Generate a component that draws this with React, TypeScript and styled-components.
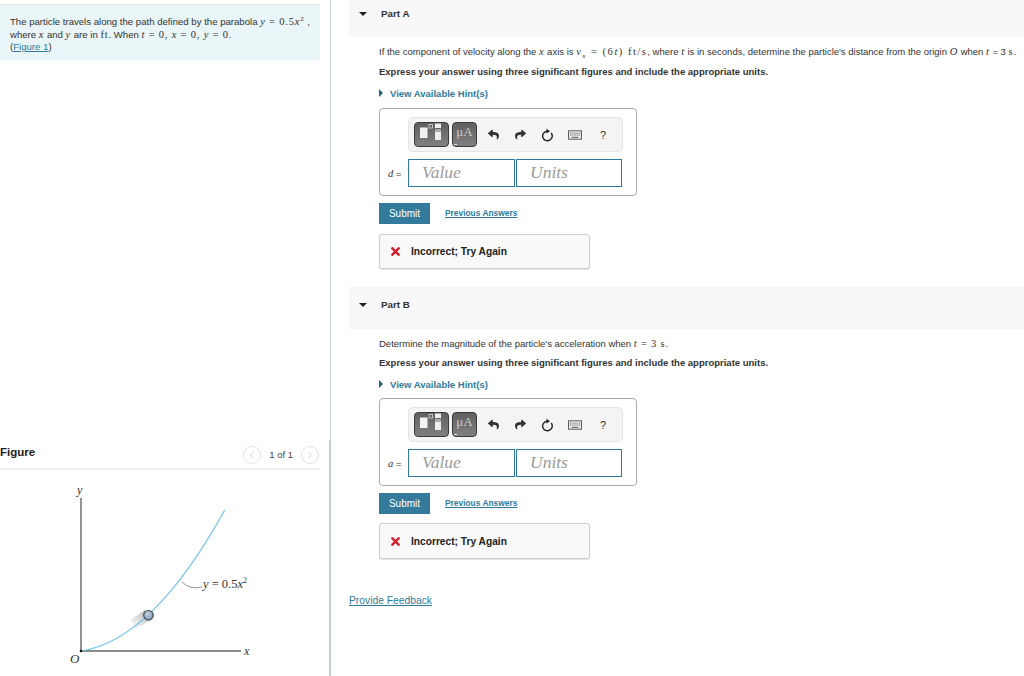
import React from "react";
import styled, { createGlobalStyle } from "styled-components";
import { FaReply, FaShare, FaTimes } from "react-icons/fa";
import { ChevronLeft, ChevronRight } from "lucide-react";

const GlobalStyle = createGlobalStyle`
  html, body {
    margin: 0;
    padding: 0;
    background: #fff;
    overflow: hidden;
  }
  body {
    font-family: "Liberation Sans", Arial, sans-serif;
    color: #333;
  }
`;

const Page = styled.div`
  display: flex;
  width: 1024px;
  height: 676px;
  overflow: hidden;
`;

const LeftPane = styled.aside`
  width: 331px;
  flex: none;
  display: flex;
  flex-direction: column;
`;

const TopBlock = styled.div`
  height: 440px;
  box-sizing: border-box;
  padding-top: 4px;
  border-right: 1px solid #ccd7e4;
`;

const Intro = styled.div`
  width: 320px;
  height: 56px;
  box-sizing: border-box;
  padding: 11px 10px 0;
  background: #e9f5f7;
  border-top: 1px solid #dfe5e7;
  font-size: 9.6px;
  line-height: 12.5px;
  white-space: nowrap;
`;

const Math = styled.span<{ $spacing?: number }>`
  font-family: "Liberation Serif", "Times New Roman", serif;
  font-size: 10.5px;
  letter-spacing: ${(p) => p.$spacing ?? 0.8}px;
  line-height: 0;
  sup,
  sub {
    font-size: 7px;
    line-height: 0;
  }
`;

const BlueLink = styled.a`
  color: #2f7a9c;
  text-decoration: underline;
`;

const BottomBlock = styled.div`
  flex: 1;
  padding-top: 5px;
  border-right: 2px solid #c3d0e0;
`;

const FigureHead = styled.div`
  width: 320px;
  height: 25px;
  box-sizing: border-box;
  display: flex;
  align-items: flex-start;
  justify-content: space-between;
  border-bottom: 2px solid #eeeeee;
`;

const FigureTitle = styled.h3`
  margin: 0;
  font-size: 11.5px;
  line-height: 14px;
  font-weight: 700;
  color: #222;
`;

const Pager = styled.div`
  display: flex;
  align-items: center;
  gap: 8px;
  margin-right: 1px;
  font-size: 9.5px;
  line-height: 20px;
  color: #444;
`;

const PagerButton = styled.span`
  width: 18px;
  height: 18px;
  box-sizing: border-box;
  border: 1px solid #e2e2e2;
  border-radius: 50%;
  display: flex;
  align-items: center;
  justify-content: center;
  color: #c4c4c4;
`;

const FigureSvg = styled.svg`
  display: block;
  width: 320px;
  height: 206px;
`;

const RightPane = styled.main`
  flex: 1;
  padding-left: 18px;
  min-width: 0;
`;

const PartHeader = styled.div<{ $height: number; $top: number }>`
  height: ${(p) => p.$height}px;
  background: #f8f8f8;
  display: flex;
  align-items: flex-start;
  padding-left: 10px;
  padding-top: ${(p) => p.$top}px;
  box-sizing: border-box;
  gap: 14px;
  font-size: 9.8px;
  font-weight: 700;
  line-height: 12px;
  color: #333;
`;

const CaretDown = styled.span`
  width: 0;
  height: 0;
  margin-top: 4px;
  border-left: 4px solid transparent;
  border-right: 4px solid transparent;
  border-top: 4px solid #222;
`;

const PartBody = styled.section<{ $bottom: number }>`
  padding: 9px 0 ${(p) => p.$bottom}px 30px;
`;

const Question = styled.p`
  margin: 0;
  font-size: 9.5px;
  line-height: 12px;
  white-space: nowrap;
  color: #333;
`;

const Instruction = styled.p<{ $top: number }>`
  margin: ${(p) => p.$top}px 0 0;
  font-size: 9.5px;
  font-weight: 700;
  line-height: 12px;
  color: #333;
`;

const Hint = styled.div`
  margin-top: 10px;
  display: flex;
  align-items: center;
  gap: 7px;
  font-size: 9.5px;
  font-weight: 700;
  line-height: 12px;
  color: #2f7a9c;
`;

const CaretRight = styled.span`
  width: 0;
  height: 0;
  margin-bottom: 2px;
  border-top: 4px solid transparent;
  border-bottom: 4px solid transparent;
  border-left: 4px solid #24607c;
`;

const AnswerBox = styled.div<{ $top: number }>`
  margin-top: ${(p) => p.$top}px;
  width: 258px;
  height: 88px;
  box-sizing: border-box;
  border: 1px solid #aaaaaa;
  border-radius: 4px;
  padding: 8px 12px 0 8px;
`;

const Toolbar = styled.div`
  margin-left: 20px;
  width: 215px;
  height: 35px;
  box-sizing: border-box;
  display: flex;
  align-items: center;
  padding-left: 5px;
  background: #f4f4f4;
  border: 1px solid #e4e4e4;
  border-radius: 5px;
`;

const DarkButton = styled.span<{ $width: number }>`
  width: ${(p) => p.$width}px;
  height: 25px;
  box-sizing: border-box;
  margin-right: 3px;
  flex: none;
  display: flex;
  align-items: flex-start;
  justify-content: center;
  position: relative;
  background: linear-gradient(#606060, #808080);
  border: 1px solid #3a3a3a;
  border-radius: 4px;
  color: #c9c9c9;
  font-family: "Liberation Serif", serif;
  font-size: 13px;
  line-height: 17px;
`;

const Underscore = styled.span`
  position: absolute;
  left: 1px;
  bottom: 1px;
  width: 3px;
  height: 1px;
  background: #e2e2e2;
`;

const ToolIcon = styled.span<{ $left: number }>`
  width: 14px;
  height: 14px;
  margin-left: ${(p) => p.$left}px;
  flex: none;
  display: flex;
  align-items: center;
  justify-content: center;
  color: #333;
  font-size: 11px;
`;

const InputRow = styled.div`
  margin-top: 7px;
  display: flex;
  align-items: center;
`;

const VarLabel = styled.span`
  width: 20px;
  flex: none;
  font-size: 9.5px;
  white-space: nowrap;
  i {
    font-family: "Liberation Serif", serif;
    font-size: 10.5px;
  }
`;

const Field = styled.div<{ $width: number }>`
  width: ${(p) => p.$width}px;
  height: 28px;
  flex: none;
  box-sizing: border-box;
  margin-right: 1px;
  padding-left: 13px;
  border: 1px solid #2f7a9c;
  font-family: "Liberation Serif", serif;
  font-style: italic;
  font-size: 17.5px;
  line-height: 25px;
  color: #9a9a9a;
`;

const SubmitRow = styled.div`
  margin-top: 7px;
  display: flex;
  align-items: center;
  gap: 15px;
`;

const SubmitButton = styled.button`
  width: 51px;
  height: 21px;
  padding: 0;
  border: none;
  background: #337a9c;
  color: #fff;
  font-family: inherit;
  font-size: 10px;
`;

const PrevLink = styled(BlueLink)`
  margin-top: -2px;
  font-size: 8.4px;
  font-weight: 700;
`;

const Feedback = styled.div<{ $top: number; $height: number }>`
  margin-top: ${(p) => p.$top}px;
  width: 211px;
  height: ${(p) => p.$height}px;
  box-sizing: border-box;
  display: flex;
  align-items: center;
  gap: 9px;
  padding-left: 9px;
  background: #f9f9f9;
  border: 1px solid #cccccc;
  border-radius: 3px;
  box-shadow: 0 1px 1px #e4e4e4;
  font-size: 10.2px;
  font-weight: 700;
  color: #222;
  svg {
    color: #d0212b;
    font-size: 13px;
  }
`;

const ProvideFeedback = styled(BlueLink)`
  display: inline-block;
  margin-top: -1px;
  font-size: 10.3px;
  line-height: 12px;
`;

const TemplateGlyph = () => (
  <svg width="32" height="23" viewBox="0 0 32 23">
    <rect x="4" y="4.500" width="7.500" height="10.500" fill="#f2f2f2" />
    <rect x="13" y="1.500" width="3.500" height="3.500" fill="none" stroke="#d8d8d8" strokeWidth="0.8" />
    <rect x="19" y="0.500" width="6" height="4.500" fill="#efefef" />
    <rect x="19" y="6.500" width="6" height="1" fill="#efefef" />
    <rect x="19" y="8.500" width="6" height="8.500" fill="#efefef" />
  </svg>
);

const ResetGlyph = () => (
  <svg width="13" height="14" viewBox="0 0 13 14">
    <path d="M6 3.200A4.800 4.800 0 1 0 10.200 5" fill="none" stroke="#222" strokeWidth="1.400" />
    <path d="M5.500 0.800 9 3.200 5.500 5.600Z" fill="#222" />
  </svg>
);

const KeyboardGlyph = () => (
  <svg width="15" height="10" viewBox="0 0 15 10">
    <rect x="0.500" y="0.500" width="14" height="9" fill="#e8e8e8" stroke="#555" />
    <path d="M2 3h11M2 5h11" stroke="#555" strokeWidth="1" strokeDasharray="1 1" />
    <path d="M4 7.500h7" stroke="#555" />
  </svg>
);

const AnswerPart = ({
  variable,
  boxTop,
  feedbackTop,
  feedbackHeight,
}: {
  variable: string;
  boxTop: number;
  feedbackTop: number;
  feedbackHeight: number;
}) => (
  <>
    <AnswerBox $top={boxTop}>
      <Toolbar>
        <DarkButton $width={35}>
          <TemplateGlyph />
        </DarkButton>
        <DarkButton $width={25}>
          μA
          <Underscore />
        </DarkButton>
        <ToolIcon $left={6}>
          <FaReply />
        </ToolIcon>
        <ToolIcon $left={13}>
          <FaShare />
        </ToolIcon>
        <ToolIcon $left={13}>
          <ResetGlyph />
        </ToolIcon>
        <ToolIcon $left={14}>
          <KeyboardGlyph />
        </ToolIcon>
        <ToolIcon $left={14}>?</ToolIcon>
      </Toolbar>
      <InputRow>
        <VarLabel>
          <i>{variable}</i> =
        </VarLabel>
        <Field $width={107}>Value</Field>
        <Field $width={106}>Units</Field>
      </InputRow>
    </AnswerBox>
    <SubmitRow>
      <SubmitButton>Submit</SubmitButton>
      <PrevLink>Previous Answers</PrevLink>
    </SubmitRow>
    <Feedback $top={feedbackTop} $height={feedbackHeight}>
      <FaTimes />
      Incorrect; Try Again
    </Feedback>
  </>
);

const Diagram = () => (
  <FigureSvg viewBox="0 470 320 206">
    <defs>
      <radialGradient id="ball" cx="40%" cy="35%" r="70%">
        <stop offset="0%" stopColor="#c5d3e2" />
        <stop offset="100%" stopColor="#7f97b0" />
      </radialGradient>
      <linearGradient id="trail" x1="0" y1="1" x2="1" y2="0">
        <stop offset="0%" stopColor="#999" stopOpacity="0" />
        <stop offset="100%" stopColor="#777" stopOpacity="0.6" />
      </linearGradient>
    </defs>
    <path d="M81 498V651H241" fill="none" stroke="#666" strokeWidth="1.400" />
    <path d="M130 620 L145 610 L150 620 L136 629 Z" fill="url(#trail)" />
    <path d="M81 651Q152.850 640.300 224.700 510" fill="none" stroke="#6cc4e8" strokeWidth="1.200" />
    <path d="M182 582Q190 590 202 587" fill="none" stroke="#777" strokeWidth="0.800" />
    <circle cx="148.500" cy="615.300" r="4.800" fill="url(#ball)" stroke="#3c4a58" strokeWidth="1.200" />
    <circle cx="81" cy="651" r="1.300" fill="#111" />
    <g fontFamily="Liberation Serif, serif" fill="#333">
      <text x="77" y="494" fontSize="12" fontStyle="italic">y</text>
      <text x="70" y="663" fontSize="13" fontStyle="italic">O</text>
      <text x="244" y="655" fontSize="12" fontStyle="italic">x</text>
      <text x="203" y="588" fontSize="12.500">
        <tspan fontStyle="italic">y</tspan> = 0.5<tspan fontStyle="italic">x</tspan>
        <tspan fontSize="8" dy="-5">2</tspan>
      </text>
    </g>
  </FigureSvg>
);

export default function App() {
  return (
    <Page>
      <GlobalStyle />
      <LeftPane>
        <TopBlock>
          <Intro>
            The particle travels along the path defined by the parabola{" "}
            <Math>
              <i>y</i> = 0.5<i>x</i>
              <sup>2</sup>
            </Math>{" "}
            ,
            <br />
            where <Math><i>x</i></Math> and <Math><i>y</i></Math> are in <Math>ft</Math>. When{" "}
            <Math>
              <i>t</i> = 0, <i>x</i> = 0, <i>y</i> = 0
            </Math>
            .
            <br />
            (<BlueLink>Figure 1</BlueLink>)
          </Intro>
        </TopBlock>
        <BottomBlock>
          <FigureHead>
            <FigureTitle>Figure</FigureTitle>
            <Pager>
              <PagerButton>
                <ChevronLeft size={12} strokeWidth={1.5} />
              </PagerButton>
              1 of 1
              <PagerButton>
                <ChevronRight size={12} strokeWidth={1.5} />
              </PagerButton>
            </Pager>
          </FigureHead>
          <Diagram />
        </BottomBlock>
      </LeftPane>
      <RightPane>
        <PartHeader $height={37} $top={8}>
          <CaretDown />
          Part A
        </PartHeader>
        <PartBody $bottom={18}>
          <Question>
            If the component of velocity along the <Math><i>x</i></Math> axis is{" "}
            <Math $spacing={1.5}>
              <i>v</i>
              <sub>
                <i>x</i>
              </sub>{" "}
              = (6<i>t</i>) ft/s
            </Math>
            , where <Math><i>t</i></Math> is in seconds, determine the particle's distance from the origin{" "}
            <Math><i>O</i></Math> when <Math><i>t</i></Math> = 3 <Math>s</Math>.
          </Question>
          <Instruction $top={8}>Express your answer using three significant figures and include the appropriate units.</Instruction>
          <Hint>
            <CaretRight />
            View Available Hint(s)
          </Hint>
          <AnswerPart variable="d" boxTop={8} feedbackTop={10} feedbackHeight={35} />
        </PartBody>
        <PartHeader $height={42} $top={12}>
          <CaretDown />
          Part B
        </PartHeader>
        <PartBody $bottom={31}>
          <Question>
            Determine the magnitude of the particle's acceleration when <Math><i>t</i> = 3 s</Math>.
          </Question>
          <Instruction $top={7}>Express your answer using three significant figures and include the appropriate units.</Instruction>
          <Hint>
            <CaretRight />
            View Available Hint(s)
          </Hint>
          <AnswerPart variable="a" boxTop={7} feedbackTop={9} feedbackHeight={36} />
        </PartBody>
        <ProvideFeedback>Provide Feedback</ProvideFeedback>
      </RightPane>
    </Page>
  );
}
